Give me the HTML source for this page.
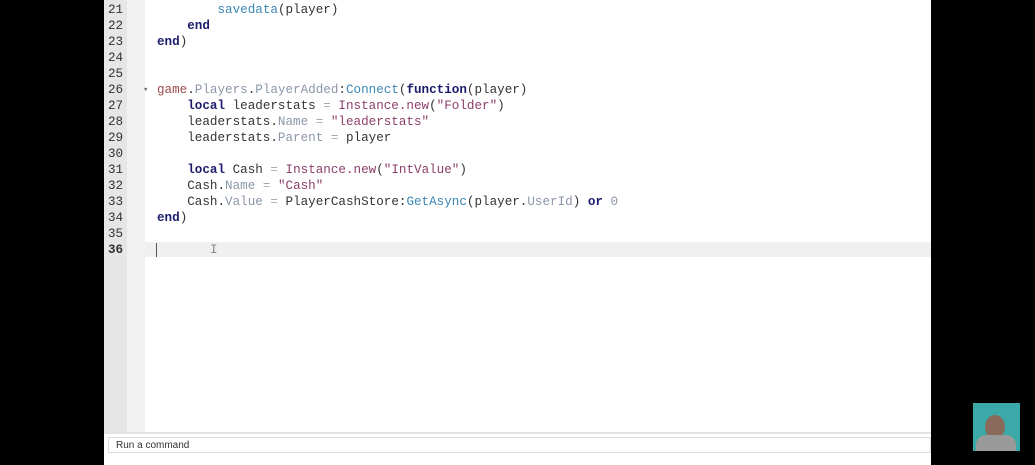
<!DOCTYPE html><html><head><style>
body{margin:0;width:1035px;height:465px;background:#000;position:relative;overflow:hidden;font-family:"Liberation Mono",monospace}
#ed{position:absolute;left:104px;top:0;width:827px;height:465px;background:#fff;overflow:hidden}
#g1{position:absolute;left:0;top:0;width:23px;height:432px;background:#e6e6e6}
#g2{position:absolute;left:23px;top:0;width:18px;height:432px;background:#f2f2f2}
.l{position:absolute;left:0;height:16px;line-height:16px;font-size:12.6px;white-space:pre;width:827px}
.n{position:absolute;left:4px;width:20px;text-align:left;color:#333}
.c{position:absolute;left:53px;color:#333}
.k{color:#1c1c6b;font-weight:bold}.p{color:#8a96a8}.f{color:#3b87b5}.s{color:#8c3f6a}.o{color:#aaa}.g{color:#9b4a4a}
#cur{position:absolute;left:41px;top:242px;width:786px;height:15px;background:#f0f0f0}
#bar{position:absolute;left:0;top:432px;width:827px;height:33px;background:#fff;border-top:2px solid #e4e4e4}
#cmd{position:absolute;left:4px;top:3px;width:823px;height:16px;border:1px solid #ddd;font:10px "Liberation Sans",sans-serif;line-height:16px;color:#333;padding-left:7px;box-sizing:border-box}
#cam{position:absolute;left:973px;top:403px;width:47px;height:48px;background:#3aa9a8}
</style></head><body>
<div id="ed">
<div id="g1"></div><div id="g2"></div><div id="cur"></div>
<div class="l" style="top:-14px"><span class="c">            <span class="f">print</span>(<span class="s">"Saving..."</span>)</span></div>
<div class="l" style="top:2px"><span class="n">21</span><span class="c">        <span class="f">savedata</span>(player)</span></div>
<div class="l" style="top:18px"><span class="n">22</span><span class="c">    <span class="k">end</span></span></div>
<div class="l" style="top:34px"><span class="n">23</span><span class="c"><span class="k">end</span>)</span></div>
<div class="l" style="top:50px"><span class="n">24</span></div>
<div class="l" style="top:66px"><span class="n">25</span></div>
<div class="l" style="top:82px"><span class="n">26</span><span style="position:absolute;left:39px;color:#777;font-size:9px">▾</span><span class="c"><span class="g">game</span>.<span class="p">Players</span>.<span class="p">PlayerAdded</span>:<span class="f">Connect</span>(<span class="k">function</span>(player)</span></div>
<div class="l" style="top:98px"><span class="n">27</span><span class="c">    <span class="k">local</span> leaderstats <span class="o">=</span> <span class="s">Instance.new</span>(<span class="s">"Folder"</span>)</span></div>
<div class="l" style="top:114px"><span class="n">28</span><span class="c">    leaderstats.<span class="p">Name</span> <span class="o">=</span> <span class="s">"leaderstats"</span></span></div>
<div class="l" style="top:130px"><span class="n">29</span><span class="c">    leaderstats.<span class="p">Parent</span> <span class="o">=</span> player</span></div>
<div class="l" style="top:146px"><span class="n">30</span></div>
<div class="l" style="top:162px"><span class="n">31</span><span class="c">    <span class="k">local</span> Cash <span class="o">=</span> <span class="s">Instance.new</span>(<span class="s">"IntValue"</span>)</span></div>
<div class="l" style="top:178px"><span class="n">32</span><span class="c">    Cash.<span class="p">Name</span> <span class="o">=</span> <span class="s">"Cash"</span></span></div>
<div class="l" style="top:194px"><span class="n">33</span><span class="c">    Cash.<span class="p">Value</span> <span class="o">=</span> PlayerCashStore:<span class="f">GetAsync</span>(player.<span class="p">UserId</span>) <span class="k">or</span> <span class="p">0</span></span></div>
<div class="l" style="top:210px"><span class="n">34</span><span class="c"><span class="k">end</span>)</span></div>
<div class="l" style="top:226px"><span class="n">35</span></div>
<div class="l" style="top:242px"><span class="n" style="font-weight:bold">36</span><span style="position:absolute;left:52px;top:1px;width:1px;height:14px;background:#555"></span><span style="position:absolute;left:106px;color:#888">I</span></div>
<div id="bar"><div id="cmd">Run a command</div></div>
</div>
<div id="cam"><div style="position:absolute;left:12px;top:12px;width:20px;height:24px;border-radius:50%;background:#8a6a5a"></div><div style="position:absolute;left:3px;top:32px;width:40px;height:16px;border-radius:10px 10px 0 0;background:#999"></div></div>
</body></html>
